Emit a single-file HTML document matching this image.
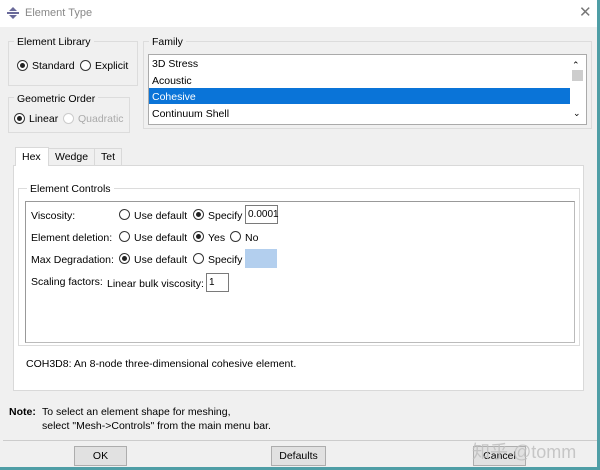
<!DOCTYPE html><html><head><style>
*{margin:0;padding:0;box-sizing:border-box}
body{width:600px;height:470px;background:#f0f0f0;font-family:"Liberation Sans","Noto Sans CJK SC",sans-serif;font-size:10.5px;color:#000;position:relative;overflow:hidden}
.a{position:absolute;white-space:nowrap}
.g{position:absolute;border:1px solid #dcdcdc}
.lbl{position:absolute;background:#f0f0f0;padding:0 3px;line-height:13px}
.r{position:absolute;width:11px;height:11px;border:1px solid #333;border-radius:50%;background:#fff}
.r.on::after{content:"";position:absolute;left:2px;top:2px;width:5px;height:5px;border-radius:50%;background:#222}
.btn{position:absolute;height:20px;border:1px solid #adadad;background:#e1e1e1;text-align:center;line-height:18px}
.inp{position:absolute;height:19px;border:1px solid #7a7a7a;background:#fff;padding-left:2px;line-height:17px;font-size:10px}
</style></head><body>
<div class="a" style="left:0;top:0;width:600px;height:27px;background:#fff"></div>
<svg class="a" style="left:6px;top:6px" width="14" height="14" viewBox="0 0 14 14"><polygon points="7,1 11,5 3,5" fill="#6a6a9a"/><polygon points="7,13 11,9 3,9" fill="#6a6a9a"/><rect x="1" y="6" width="12" height="2" fill="#6a6a9a"/></svg>
<div class="a" style="left:25px;top:7px;color:#888;font-size:11px">Element Type</div>
<div class="a" style="left:579px;top:3px;color:#777;font-size:15px">✕</div>
<div class="a" style="left:597px;top:0;width:3px;height:470px;background:#4f9ea6"></div>
<div class="a" style="left:0;top:467px;width:600px;height:3px;background:#4f9ea6"></div>

<div class="g" style="left:8px;top:41px;width:130px;height:45px"></div>
<div class="lbl" style="left:14px;top:36px">Element Library</div>
<div class="r on" style="left:17px;top:60px"></div><div class="a" style="left:32px;top:60px">Standard</div>
<div class="r" style="left:80px;top:60px"></div><div class="a" style="left:95px;top:60px">Explicit</div>

<div class="g" style="left:8px;top:97px;width:122px;height:36px"></div>
<div class="lbl" style="left:14px;top:93px">Geometric Order</div>
<div class="r on" style="left:14px;top:113px"></div><div class="a" style="left:29px;top:113px">Linear</div>
<div class="r" style="left:63px;top:113px;border-color:#ccc"></div><div class="a" style="left:78px;top:113px;color:#aaa">Quadratic</div>

<div class="g" style="left:143px;top:41px;width:449px;height:88px"></div>
<div class="lbl" style="left:149px;top:36px">Family</div>
<div class="a" style="left:148px;top:54px;width:439px;height:71px;background:#fff;border:1px solid #aaa"></div>
<div class="a" style="left:152px;top:58px">3D Stress</div>
<div class="a" style="left:152px;top:75px">Acoustic</div>
<div class="a" style="left:149px;top:88px;width:421px;height:16px;background:#0a74d8"></div>
<div class="a" style="left:152px;top:91px;color:#fff">Cohesive</div>
<div class="a" style="left:152px;top:108px">Continuum Shell</div>
<div class="a" style="left:572px;top:60px;font-size:9px">⌃</div>
<div class="a" style="left:572px;top:70px;width:11px;height:11px;background:#cdcdcd"></div>
<div class="a" style="left:573px;top:108px;font-size:9px">⌄</div>

<div class="a" style="left:13px;top:165px;width:571px;height:226px;background:#fff;border:1px solid #d9d9d9"></div>
<div class="a" style="left:15px;top:147px;width:34px;height:19px;background:#fff;border:1px solid #d9d9d9;border-bottom:none"></div>
<div class="a" style="left:22px;top:151px">Hex</div>
<div class="a" style="left:48px;top:148px;width:47px;height:17px;border:1px solid #d9d9d9;border-bottom:none"></div>
<div class="a" style="left:55px;top:151px">Wedge</div>
<div class="a" style="left:94px;top:148px;width:28px;height:17px;border:1px solid #d9d9d9;border-bottom:none"></div>
<div class="a" style="left:101px;top:151px">Tet</div>

<div class="a" style="left:18px;top:188px;width:562px;height:158px;border:1px solid #dcdcdc"></div>
<div class="a" style="left:27px;top:183px;background:#fff;padding:0 3px">Element Controls</div>
<div class="a" style="left:25px;top:201px;width:550px;height:142px;border:1px solid #bbb;border-left-color:#999;border-top-color:#999"></div>

<div class="a" style="left:31px;top:210px">Viscosity:</div>
<div class="r" style="left:119px;top:209px"></div><div class="a" style="left:134px;top:210px">Use default</div>
<div class="r on" style="left:193px;top:209px"></div><div class="a" style="left:208px;top:210px">Specify</div>
<div class="inp" style="left:245px;top:205px;width:33px">0.0001</div>

<div class="a" style="left:31px;top:232px">Element deletion:</div>
<div class="r" style="left:119px;top:231px"></div><div class="a" style="left:134px;top:232px">Use default</div>
<div class="r on" style="left:193px;top:231px"></div><div class="a" style="left:208px;top:232px">Yes</div>
<div class="r" style="left:230px;top:231px"></div><div class="a" style="left:245px;top:232px">No</div>

<div class="a" style="left:31px;top:254px">Max Degradation:</div>
<div class="r on" style="left:119px;top:253px"></div><div class="a" style="left:134px;top:254px">Use default</div>
<div class="r" style="left:193px;top:253px"></div><div class="a" style="left:208px;top:254px">Specify</div>
<div class="a" style="left:245px;top:249px;width:32px;height:19px;background:#b3cfee"></div>

<div class="a" style="left:31px;top:276px">Scaling factors:</div>
<div class="a" style="left:107px;top:278px">Linear bulk viscosity:</div>
<div class="inp" style="left:206px;top:273px;width:23px">1</div>

<div class="a" style="left:26px;top:358px">COH3D8: An 8-node three-dimensional cohesive element.</div>

<div class="a" style="left:9px;top:406px;font-weight:bold">Note:</div>
<div class="a" style="left:42px;top:406px">To select an element shape for meshing,</div>
<div class="a" style="left:42px;top:420px">select "Mesh-&gt;Controls" from the main menu bar.</div>

<div class="a" style="left:3px;top:440px;width:594px;height:1px;background:#ccc"></div>
<div class="btn" style="left:74px;top:446px;width:53px">OK</div>
<div class="btn" style="left:271px;top:446px;width:55px">Defaults</div>
<div class="btn" style="left:473px;top:446px;width:53px">Cancel</div>
<div class="a" style="left:472px;top:438px;font-size:18px;color:rgba(190,190,190,0.85)">知乎 @tomm</div>
</body></html>
